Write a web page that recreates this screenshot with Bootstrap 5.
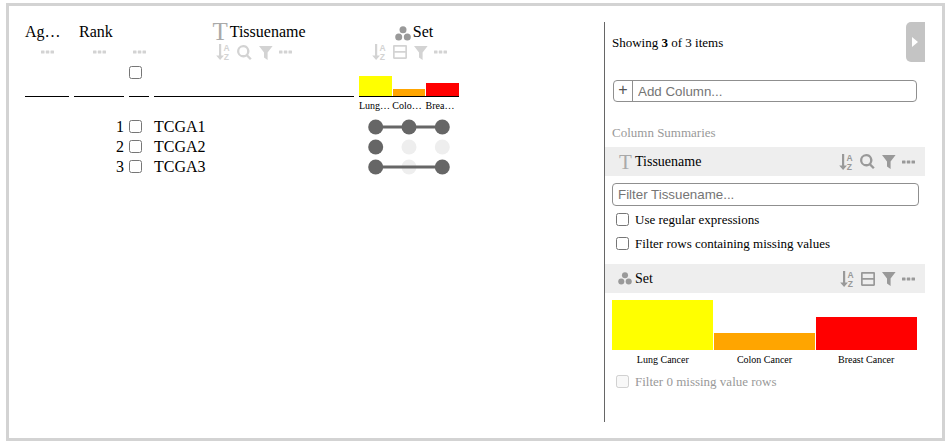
<!DOCTYPE html>
<html lang="en">
<head>
<meta charset="utf-8">
<title>Ranking</title>
<link href="https://cdn.jsdelivr.net/npm/bootstrap@5.3.0/dist/css/bootstrap.min.css" rel="stylesheet">
<style>
html,body{background:#fff;height:448px;overflow:hidden}
body{font-family:"Liberation Serif",serif;font-size:16px;line-height:20px;color:#000}
.shell{margin:3px 0 0 6px;width:939px;height:438px;border:3px solid #d3d3d3;padding:16px 17px 16px 16px}
.board{width:579px}
.ranktable{display:grid;grid-template-columns:44px 50px 20px 200px 100px;column-gap:5px;grid-template-rows:22px 16px 36px 1px 20px 20px 20px 20px}
.ttl{white-space:nowrap;height:22px;line-height:19px}
.ttl.inset{padding-left:5px}
.ttl.shifted{padding-left:10px;gap:2px}
.tools{height:16px;color:#d3d3d3}
.toolrun{gap:7px}
.toolrun .tico:last-child,.sideicons .tico:last-child{margin-left:-1px}
.drop{display:block;height:36px}
.rule{background:#000;height:1px}
.checkcell{height:36px;padding-top:6px;line-height:0}
input[type=checkbox]{margin:0;width:13px;height:13px;display:block}
.cellcheck{line-height:0;padding-top:3px}
.numcell{text-align:right;grid-column:2}
.minilabels{font-size:10px;line-height:15px;padding-top:1px}
.minilabels span{width:33.3px;white-space:nowrap}
.minibars{height:36px;align-items:flex-end}
.minibars i,.bigbars i{display:block;flex:1 1 0}
.minibars i+i{margin-left:1px}
.c-y{background:#ff0}.c-o{background:orange}.c-r{background:red}
.dotsvg{display:block;width:100px;height:20px}
.tico{fill:currentColor;display:block;flex:none}
.tword{font-size:25px;line-height:20px;color:#a9a9a9;font-family:"Liberation Serif",serif}
.sidepanel{width:321px;height:400px;border-left:1px solid #666;font-size:13px;line-height:15px;position:relative}
.flap{position:absolute;right:0;top:0;width:19px;height:40px;background:#c4c4c4;border-radius:5px 0 0 5px}
.flap::after{content:"";position:absolute;left:6px;top:15px;border-left:6px solid #fff;border-top:5px solid transparent;border-bottom:5px solid transparent}
.showline{height:41px;padding:13px 0 0 7px}
.addbox{margin:17px 0 0 8px;width:304px;height:22px;border:1px solid #8f8f8f;border-radius:4px;overflow:hidden;font-family:"Liberation Sans",sans-serif;font-size:13.33px;line-height:20px}
.plusbit{width:19px;border-right:1px solid #8f8f8f;color:#555;text-align:center;font-size:16px;line-height:17px;flex:none;font-weight:300}
.addbox .form-control{border:0;border-radius:0;padding:1px 0 0 5px;font-size:13.33px;line-height:19px;min-height:0;height:20px;font-family:"Liberation Sans",sans-serif;background:transparent}
.form-control::placeholder{color:#757575;opacity:1}
.sumhead{margin:23px 0 0 7px;height:22px;color:#999}
.barhead{height:29px;background:#eee;font-size:14px;color:#000;padding:0 10px 0 14px}
.barhead .tword{font-size:21px;margin-right:4px;width:12px;text-align:center}
.barhead .setmark{margin-right:3px;margin-left:-1px}
.sideicons{color:#999;gap:7px;margin-left:auto}
.filterbox.form-control{margin:7px 0 0 7px;width:307px;height:23px;min-height:0;border:1px solid #8f8f8f;border-radius:4px;font-family:"Liberation Sans",sans-serif;font-size:13.33px;line-height:21px;padding:0 0 0 5px}
.optline{margin:0 0 0 11px;gap:6px;height:24px}
.optline.first{margin-top:1px}
.optline.last{margin-bottom:9px}
.bigbars{margin:7px 0 0 7px;width:305px;height:50px;align-items:flex-end}
.bigbars i+i{margin-left:1px}
.biglabels{margin-left:7px;width:305px;font-size:10px;line-height:20px;text-align:center}
.biglabels span{flex:1 1 0}
.mutedline{color:#999;margin:-1px 0 0 11px;gap:6px;height:24px}
.symdefs{position:absolute;width:0;height:0}
</style>
</head>
<body>
<svg class="symdefs" aria-hidden="true">
<defs>
<symbol id="i-sort" viewBox="0 0 14 18">
<path d="M3 1h2.200v11.500H8L4.100 17 .2 12.500H3z"/>
<text x="7.600" y="8" font-family="Liberation Sans" font-size="8.500" font-weight="bold">A</text>
<text x="7.800" y="16.500" font-family="Liberation Sans" font-size="8.500" font-weight="bold">Z</text>
</symbol>
<symbol id="i-search" viewBox="0 0 15 15">
<path fill-rule="evenodd" d="M6.200 0a6.200 6.200 0 0 1 5 9.900l3.500 3.500-1.700 1.600-3.500-3.500A6.200 6.200 0 1 1 6.200 0zm0 2.300a3.900 3.900 0 1 0 0 7.800 3.900 3.900 0 0 0 0-7.800z"/>
</symbol>
<symbol id="i-funnel" viewBox="0 0 14 15">
<path d="M0 1h13.600L8.600 7.400V15L5 12.600V7.400z"/>
</symbol>
<symbol id="i-more" viewBox="0 0 13 4">
<rect x="0" y=".5" width="3.500" height="3" rx=".5"/><rect x="4.800" y=".5" width="3.500" height="3" rx=".5"/><rect x="9.500" y=".5" width="3.500" height="3" rx=".5"/>
</symbol>
<symbol id="i-split" viewBox="0 0 14 14">
<path fill-rule="evenodd" d="M1.200 0h11.600c.7 0 1.200.5 1.200 1.200v11.600c0 .7-.5 1.200-1.200 1.200H1.200C.5 14 0 13.500 0 12.800V1.200C0 .5.500 0 1.200 0zM1.700 1.700v4.300h10.600V1.700zM1.700 7.800v4.500h10.600V7.800z"/>
</symbol>
<symbol id="i-set" viewBox="0 0 16 15">
<circle cx="8" cy="3.700" r="3.500"/><circle cx="3.700" cy="11" r="3.500"/><circle cx="12.300" cy="11" r="3.500"/>
</symbol>
</defs>
</svg>
<div class="shell d-flex justify-content-between">
  <div class="board">
    <div class="ranktable">
      <div class="ttl">Ag…</div>
      <div class="ttl inset">Rank</div>
      <div class="ttl"></div>
      <div class="ttl shifted d-flex justify-content-center align-items-start"><span class="tword">T</span>Tissuename</div>
      <div class="ttl shifted d-flex justify-content-center align-items-start"><svg class="tico mt-1" width="16" height="15" style="color:#999"><use href="#i-set"/></svg>Set</div>

      <div class="tools d-flex justify-content-center align-items-center"><svg class="tico" width="13" height="4"><use href="#i-more"/></svg></div>
      <div class="tools d-flex justify-content-center align-items-center"><svg class="tico" width="13" height="4"><use href="#i-more"/></svg></div>
      <div class="tools d-flex justify-content-center align-items-center"><svg class="tico" width="13" height="4"><use href="#i-more"/></svg></div>
      <div class="tools toolrun d-flex justify-content-center align-items-center"><svg class="tico" width="14" height="18"><use href="#i-sort"/></svg><svg class="tico" width="15" height="15"><use href="#i-search"/></svg><svg class="tico" width="14" height="15"><use href="#i-funnel"/></svg><svg class="tico" width="13" height="4"><use href="#i-more"/></svg></div>
      <div class="tools toolrun d-flex justify-content-center align-items-center"><svg class="tico" width="14" height="18"><use href="#i-sort"/></svg><svg class="tico" width="14" height="14"><use href="#i-split"/></svg><svg class="tico" width="14" height="15"><use href="#i-funnel"/></svg><svg class="tico" width="13" height="4"><use href="#i-more"/></svg></div>

      <div class="drop"></div>
      <div class="drop"></div>
      <div class="checkcell d-flex"><input type="checkbox" aria-label="Select all"></div>
      <div class="drop"></div>
      <div class="minibars d-flex"><i class="c-y" style="height:20px"></i><i class="c-o" style="height:7px"></i><i class="c-r" style="height:13px"></i></div>

      <div class="rule"></div><div class="rule"></div><div class="rule"></div><div class="rule"></div><div class="rule"></div>

      <div></div><div></div><div></div><div></div>
      <div class="minilabels d-flex"><span>Lung…</span><span>Colo…</span><span>Brea…</span></div>

      <div class="numcell">1</div><div class="cellcheck d-flex"><input type="checkbox" aria-label="Select row 1"></div><div>TCGA1</div>
      <svg class="dotsvg" viewBox="0 0 100 20"><circle cx="16.700" cy="10" r="7.500" fill="#666"/><circle cx="50" cy="10" r="7.500" fill="#666"/><circle cx="83.300" cy="10" r="7.500" fill="#666"/><line x1="16.700" x2="83.300" y1="10" y2="10" stroke="#666" stroke-width="3"/></svg>
      <div class="numcell">2</div><div class="cellcheck d-flex"><input type="checkbox" aria-label="Select row 2"></div><div>TCGA2</div>
      <svg class="dotsvg" viewBox="0 0 100 20"><circle cx="16.700" cy="10" r="7.500" fill="#666"/><circle cx="50" cy="10" r="7.500" fill="#eee"/><circle cx="83.300" cy="10" r="7.500" fill="#eee"/></svg>
      <div class="numcell">3</div><div class="cellcheck d-flex"><input type="checkbox" aria-label="Select row 3"></div><div>TCGA3</div>
      <svg class="dotsvg" viewBox="0 0 100 20"><circle cx="50" cy="10" r="7.500" fill="#eee"/><circle cx="16.700" cy="10" r="7.500" fill="#666"/><circle cx="83.300" cy="10" r="7.500" fill="#666"/><line x1="16.700" x2="83.300" y1="10" y2="10" stroke="#666" stroke-width="3"/></svg>
    </div>
  </div>

  <aside class="sidepanel">
    <div class="flap"></div>
    <div class="showline">Showing <b>3</b> of 3 items</div>
    <div class="addbox d-flex"><span class="plusbit">+</span><input class="form-control" type="text" placeholder="Add Column..."></div>
    <div class="sumhead">Column Summaries</div>
    <div class="barhead d-flex align-items-center"><span class="tword">T</span>Tissuename
      <div class="sideicons d-flex align-items-center"><svg class="tico" width="14" height="18"><use href="#i-sort"/></svg><svg class="tico" width="15" height="15"><use href="#i-search"/></svg><svg class="tico" width="14" height="15"><use href="#i-funnel"/></svg><svg class="tico" width="13" height="4"><use href="#i-more"/></svg></div>
    </div>
    <input class="filterbox form-control" type="text" placeholder="Filter Tissuename...">
    <label class="optline first d-flex align-items-center"><input type="checkbox">Use regular expressions</label>
    <label class="optline last d-flex align-items-center"><input type="checkbox">Filter rows containing missing values</label>
    <div class="barhead d-flex align-items-center"><svg class="tico setmark" width="14" height="13" style="color:#999"><use href="#i-set"/></svg>Set
      <div class="sideicons d-flex align-items-center"><svg class="tico" width="14" height="18"><use href="#i-sort"/></svg><svg class="tico" width="14" height="14"><use href="#i-split"/></svg><svg class="tico" width="14" height="15"><use href="#i-funnel"/></svg><svg class="tico" width="13" height="4"><use href="#i-more"/></svg></div>
    </div>
    <div class="bigbars d-flex"><i class="c-y" style="height:50px"></i><i class="c-o" style="height:17px"></i><i class="c-r" style="height:33px"></i></div>
    <div class="biglabels d-flex"><span>Lung Cancer</span><span>Colon Cancer</span><span>Breast Cancer</span></div>
    <label class="mutedline d-flex align-items-center"><input type="checkbox" disabled>Filter 0 missing value rows</label>
  </aside>
</div>
<script src="https://cdn.jsdelivr.net/npm/bootstrap@5.3.0/dist/js/bootstrap.bundle.min.js"></script>
</body>
</html>
